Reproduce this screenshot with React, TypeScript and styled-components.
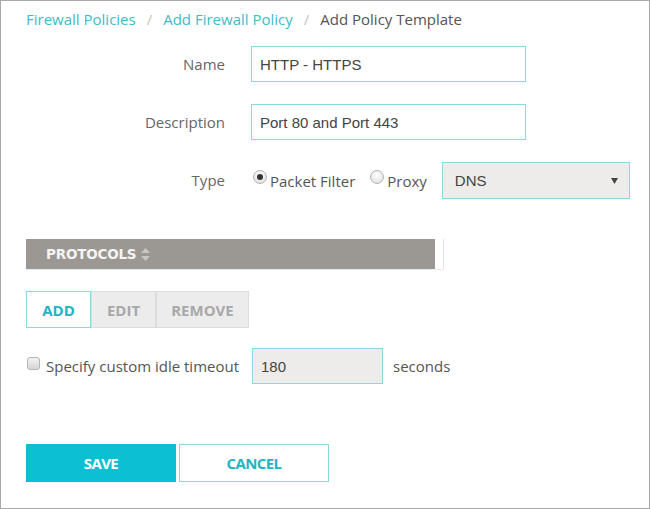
import styled, { createGlobalStyle } from "styled-components";

const GlobalStyle = createGlobalStyle`
  html, body {
    margin: 0;
    padding: 0;
    background: #ffffff;
  }
  body {
    font-family: "Open Sans", "Liberation Sans", sans-serif;
  }
`;

const Page = styled.div`
  box-sizing: border-box;
  width: 650px;
  height: 509px;
  border: 1px solid #a9a9a9;
  padding: 8px 0 0 25px;
  display: flex;
  flex-direction: column;
`;

const Breadcrumb = styled.div`
  display: flex;
  align-items: center;
  font-size: 15px;
  line-height: 20px;
  color: #5a5a5a;
`;

const Crumb = styled.span<{ $link?: boolean }>`
  color: ${(p) => (p.$link ? "#3dbcc9" : "#555555")};
`;

const Sep = styled.span`
  color: #c6c6c6;
  margin: 0 11px;
`;

const Form = styled.div`
  display: flex;
  flex-direction: column;
  gap: 22px;
  margin-top: 17px;
`;

const Row = styled.div`
  display: grid;
  grid-template-columns: 199px auto;
  column-gap: 26px;
  align-items: center;
`;

const Label = styled.div<{ $offset?: number }>`
  text-align: right;
  font-size: 15px;
  color: #666666;
  margin-top: ${(p) => p.$offset ?? 0}px;
`;

const TextInput = styled.div<{ $width: number; $filled?: boolean }>`
  box-sizing: border-box;
  width: ${(p) => p.$width}px;
  height: 36px;
  border: 1px solid #86dbe1;
  background: ${(p) => (p.$filled ? "#eeecea" : "#ffffff")};
  padding: 0 8px;
  display: flex;
  align-items: center;
  font-family: "Liberation Sans", Arial, sans-serif;
  font-size: 15px;
  color: #444444;
`;

const TypeField = styled.div`
  display: flex;
  align-items: center;
`;

const RadioLabel = styled.label<{ $gap: number }>`
  display: flex;
  align-items: center;
  font-size: 15px;
  color: #555555;
  margin-right: ${(p) => p.$gap}px;
`;

const RadioDot = styled.span<{ $checked?: boolean }>`
  box-sizing: border-box;
  width: 14px;
  height: 14px;
  border-radius: 50%;
  border: 1px solid #b5b5b5;
  background: radial-gradient(circle at 50% 35%, #ffffff 0%, #dadada 100%);
  margin: -8px 3px 0 2px;
  display: flex;
  align-items: center;
  justify-content: center;

  &::after {
    content: "";
    display: ${(p) => (p.$checked ? "block" : "none")};
    width: 6px;
    height: 6px;
    border-radius: 50%;
    background: #333333;
  }
`;

const Select = styled.div`
  box-sizing: border-box;
  width: 188px;
  height: 37px;
  border: 1px solid #86dbe1;
  background: #eeecea;
  display: flex;
  align-items: center;
  justify-content: space-between;
  padding: 0 11px 0 12px;
  font-family: "Liberation Sans", Arial, sans-serif;
  font-size: 15px;
  color: #444444;
`;

const TableWrap = styled.div`
  width: 417px;
  margin-top: 40px;
  border-right: 1px solid #e3e3e3;
  border-bottom: 1px solid #ececec;
`;

const TableHead = styled.div`
  width: 409px;
  height: 30px;
  background: #9b9893;
  display: flex;
  align-items: center;
  padding-left: 20px;
  box-sizing: border-box;
  font-family: "DejaVu Sans", Verdana, sans-serif;
  font-weight: bold;
  font-size: 13.5px;
  color: #f4f4f4;
  letter-spacing: -0.2px;
`;

const SortIcon = styled.svg`
  margin-left: 5px;
`;

const ButtonGroup = styled.div`
  display: flex;
  margin-top: 21px;
`;

const GroupButton = styled.div<{ $active?: boolean; $width: number }>`
  box-sizing: border-box;
  width: ${(p) => p.$width}px;
  height: 37px;
  display: flex;
  align-items: center;
  justify-content: center;
  font-size: 15px;
  font-weight: 700;
  border: 1px solid ${(p) => (p.$active ? "#86dbe1" : "#dddddd")};
  background: ${(p) => (p.$active ? "#ffffff" : "#ececec")};
  color: ${(p) => (p.$active ? "#21b4c4" : "#a8a8a8")};
  & + & {
    border-left-color: #dddddd;
  }
`;

const TimeoutRow = styled.div`
  display: flex;
  align-items: center;
  margin-top: 20px;
`;

const CheckBox = styled.span`
  box-sizing: border-box;
  width: 13px;
  height: 13px;
  border-radius: 3px;
  border: 1px solid #b5b5b5;
  background: linear-gradient(#f2f2f2, #d6d6d6);
  margin: -6px 6px 0 1px;
`;

const TimeoutText = styled.span<{ $before?: number; $after?: number }>`
  font-size: 15px;
  color: #555555;
  margin-left: ${(p) => p.$before ?? 0}px;
  margin-right: ${(p) => p.$after ?? 0}px;
`;

const Actions = styled.div`
  display: flex;
  gap: 3px;
  margin-top: 60px;
`;

const ActionButton = styled.div<{ $primary?: boolean }>`
  box-sizing: border-box;
  width: 150px;
  height: 38px;
  display: flex;
  align-items: center;
  justify-content: center;
  font-size: 15px;
  font-weight: 700;
  letter-spacing: -0.6px;
  background: ${(p) => (p.$primary ? "#0cbfd3" : "#ffffff")};
  color: ${(p) => (p.$primary ? "#ffffff" : "#20b5c6")};
  border: 1px solid ${(p) => (p.$primary ? "#0cbfd3" : "#86dbe1")};
`;

export default function App() {
  return (
    <>
      <GlobalStyle />
      <Page>
        <Breadcrumb>
          <Crumb $link>Firewall Policies</Crumb>
          <Sep>/</Sep>
          <Crumb $link>Add Firewall Policy</Crumb>
          <Sep>/</Sep>
          <Crumb>Add Policy Template</Crumb>
        </Breadcrumb>

        <Form>
          <Row>
            <Label>Name</Label>
            <TextInput $width={275}>HTTP - HTTPS</TextInput>
          </Row>
          <Row>
            <Label>Description</Label>
            <TextInput $width={275}>Port 80 and Port 443</TextInput>
          </Row>
          <Row>
            <Label $offset={-2}>Type</Label>
            <TypeField>
              <RadioLabel $gap={13}>
                <RadioDot $checked />
                Packet Filter
              </RadioLabel>
              <RadioLabel $gap={15}>
                <RadioDot />
                Proxy
              </RadioLabel>
              <Select>
                DNS
                <svg width="7" height="6" viewBox="0 0 7 6">
                  <path d="M0 0 L7 0 L3.5 6 Z" fill="#444" />
                </svg>
              </Select>
            </TypeField>
          </Row>
        </Form>

        <TableWrap>
          <TableHead>
            PROTOCOLS
            <SortIcon width="9" height="13" viewBox="0 0 9 13">
              <path d="M4.5 0 L9 5 L0 5 Z" fill="#c9c7c3" />
              <path d="M0 8 L9 8 L4.5 13 Z" fill="#c9c7c3" />
            </SortIcon>
          </TableHead>
        </TableWrap>

        <ButtonGroup>
          <GroupButton $active $width={65}>ADD</GroupButton>
          <GroupButton $width={65}>EDIT</GroupButton>
          <GroupButton $width={93}>REMOVE</GroupButton>
        </ButtonGroup>

        <TimeoutRow>
          <CheckBox />
          <TimeoutText $after={13}>Specify custom idle timeout</TimeoutText>
          <TextInput $width={131} $filled>180</TextInput>
          <TimeoutText $before={10}>seconds</TimeoutText>
        </TimeoutRow>

        <Actions>
          <ActionButton $primary>SAVE</ActionButton>
          <ActionButton>CANCEL</ActionButton>
        </Actions>
      </Page>
    </>
  );
}
